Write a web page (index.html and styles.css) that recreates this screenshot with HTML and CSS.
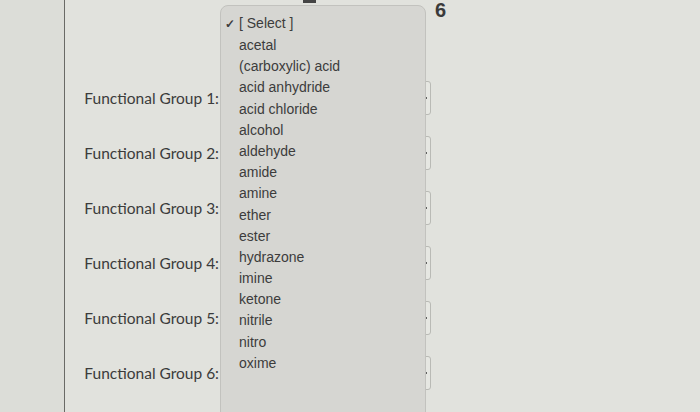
FILE: index.html
```html
<!DOCTYPE html>
<html>
<head>
<meta charset="utf-8">
<link rel="stylesheet" href="styles.css">
</head>
<body>
<div class="page">
  <div class="gutter"></div>
  <div class="main">
    <div class="topbar"><span class="mark"></span><span class="num">6</span></div>
    <div class="rows">
      <div class="row"><label class="label">Functional Group 1:</label><div class="select"><span class="arrow"></span></div></div>
      <div class="row"><label class="label">Functional Group 2:</label><div class="select"><span class="arrow"></span></div></div>
      <div class="row"><label class="label">Functional Group 3:</label><div class="select"><span class="arrow"></span></div></div>
      <div class="row"><label class="label">Functional Group 4:</label><div class="select"><span class="arrow"></span></div></div>
      <div class="row"><label class="label">Functional Group 5:</label><div class="select"><span class="arrow"></span></div></div>
      <div class="row"><label class="label">Functional Group 6:</label><div class="select"><span class="arrow"></span></div></div>
    </div>
  </div>
  <ul class="popup">
    <li class="opt selected"><span class="check">✓</span>[ Select ]</li>
    <li class="opt">acetal</li>
    <li class="opt">(carboxylic) acid</li>
    <li class="opt">acid anhydride</li>
    <li class="opt">acid chloride</li>
    <li class="opt">alcohol</li>
    <li class="opt">aldehyde</li>
    <li class="opt">amide</li>
    <li class="opt">amine</li>
    <li class="opt">ether</li>
    <li class="opt">ester</li>
    <li class="opt">hydrazone</li>
    <li class="opt">imine</li>
    <li class="opt">ketone</li>
    <li class="opt">nitrile</li>
    <li class="opt">nitro</li>
    <li class="opt">oxime</li>
  </ul>
</div>
</body>
</html>
```

FILE: styles.css
```css
html, body {
  margin: 0;
  padding: 0;
  width: 700px;
  height: 412px;
  overflow: hidden;
  background: #e1e2dd;
}
.page {
  position: relative;
  display: flex;
  width: 700px;
  height: 412px;
  font-family: Lato, "Liberation Sans", sans-serif;
}
.gutter {
  width: 64px;
  flex: none;
  background: #dcddd8;
  border-right: 1px solid #6a6a66;
}
.main {
  flex: 1;
  display: flex;
  flex-direction: column;
}
.topbar {
  height: 20px;
  display: flex;
  align-items: flex-start;
}
.mark {
  width: 13px;
  height: 3px;
  background: #444;
  margin-left: 238px;
}
.num {
  margin-left: 119px;
  font-family: "Liberation Sans", Arial, sans-serif;
  font-weight: bold;
  font-size: 20px;
  line-height: 20px;
  color: #3a3a3a;
}
.rows {
  padding-top: 50px;
  display: flex;
  flex-direction: column;
}
.row {
  height: 55px;
  display: grid;
  grid-template-columns: 154px 207px;
  column-gap: 5px;
  align-items: center;
}
.label {
  text-align: right;
  font-size: 15.5px;
  color: #3b3b3b;
}
.select {
  height: 34px;
  box-sizing: border-box;
  border: 1px solid #b9bab5;
  border-radius: 3px;
  background: #e6e7e2;
  display: flex;
  align-items: center;
  justify-content: flex-end;
  padding-right: 3px;
}
.arrow {
  width: 2px;
  height: 2px;
  background: #333;
  border-radius: 1px;
}
.popup {
  position: absolute;
  left: 220px;
  top: 5px;
  width: 206px;
  height: 420px;
  margin: 0;
  padding: 5px 0 0 0;
  list-style: none;
  box-sizing: border-box;
  background: #d6d6d2;
  border: 1px solid #c2c2be;
  border-radius: 8px;
  font-family: "Liberation Sans", Arial, sans-serif;
  font-size: 14px;
  color: #3c3c3c;
}
.opt {
  height: 21.2px;
  line-height: 21.2px;
  padding-left: 18px;
  white-space: nowrap;
}
.opt.selected {
  height: 24px;
  line-height: 24px;
  padding-left: 4px;
}
.check {
  display: inline-block;
  width: 14px;
  font-size: 12px;
  font-weight: bold;
}
```
